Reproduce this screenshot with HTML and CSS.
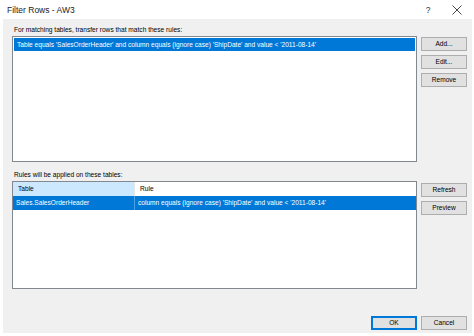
FILE: index.html
```html
<!DOCTYPE html>
<html>
<head>
<meta charset="utf-8">
<link rel="stylesheet" href="styles.css">
</head>
<body>
<div class="titlebar">
  <span class="title">Filter Rows - AW3</span>
  <span class="ctrl help">?</span>
  <span class="ctrl close">
    <svg width="10" height="10" viewBox="0 0 10 10"><path d="M0.5 0.5 L9.5 9.5 M9.5 0.5 L0.5 9.5" stroke="#333" stroke-width="0.9" fill="none"/></svg>
  </span>
</div>
<div class="window">
  <div class="label">For matching tables, transfer rows that match these rules:</div>
  <div class="section">
    <div class="list list-rules">
      <div class="row selected">Table equals 'SalesOrderHeader' and column equals (ignore case) 'ShipDate' and value &lt; '2011-08-14'</div>
    </div>
    <div class="buttons">
      <button class="btn">Add...</button>
      <button class="btn">Edit...</button>
      <button class="btn">Remove</button>
    </div>
  </div>
  <div class="label label2">Rules will be applied on these tables:</div>
  <div class="section">
    <div class="list list-tables">
      <div class="grid-row header">
        <div class="cell c1 sorted">Table</div>
        <div class="cell c2">Rule</div>
      </div>
      <div class="grid-row selected">
        <div class="cell c1">Sales.SalesOrderHeader</div>
        <div class="cell c2">column equals (ignore case) 'ShipDate' and value &lt; '2011-08-14'</div>
      </div>
    </div>
    <div class="buttons">
      <button class="btn">Refresh</button>
      <button class="btn">Preview</button>
    </div>
  </div>
  <div class="footer">
    <button class="btn ok">OK</button>
    <button class="btn">Cancel</button>
  </div>
</div>
</body>
</html>
```

FILE: styles.css
```css
html, body {
  margin: 0;
  padding: 0;
  background: #ffffff;
  font-family: "Liberation Sans", Arial, sans-serif;
  color: #000;
}
.titlebar {
  height: 19px;
  display: flex;
  align-items: center;
  padding-left: 7px;
  font-size: 8.5px;
  color: #222;
}
.title {
  flex: 1;
}
.ctrl {
  display: flex;
  align-items: center;
  justify-content: center;
}
.help {
  width: 12px;
  margin-right: 18px;
  font-size: 8.5px;
  color: #333;
}
.close {
  width: 10px;
  margin-right: 12px;
}
.window {
  margin: 0 2px 0 3px;
  height: 314px;
  background: #f0f0f0;
  padding: 5px 5px 0 9px;
  box-sizing: border-box;
  font-size: 6.6px;
}
.label {
  height: 12px;
  line-height: 11px;
  padding-left: 2px;
}
.label2 {
  margin-top: 7px;
}
.section {
  display: flex;
  gap: 4px;
}
.list {
  width: 405px;
  background: #fff;
  border: 1px solid #828790;
  box-sizing: border-box;
}
.list-rules {
  height: 126px;
  padding: 1px;
}
.list-tables {
  height: 108px;
}
.row {
  height: 13px;
  line-height: 13px;
  padding-left: 3px;
  white-space: nowrap;
}
.selected {
  background: #0078d7;
  color: #fff;
}
.grid-row {
  display: flex;
  height: 14px;
  line-height: 14px;
  white-space: nowrap;
}
.cell {
  padding-left: 3px;
  overflow: hidden;
  box-sizing: border-box;
}
.c1 {
  width: 121px;
  flex: none;
}
.c2 {
  flex: 1;
  border-left: 1px solid #d8e8f5;
}
.header .cell {
  padding-left: 5px;
}
.header .sorted {
  background: #cce8ff;
}
.header .c2 {
  border-left: 1px solid #e5e5e5;
}
.selected .c2 {
  border-left: 1px solid #4da3e8;
}
.buttons {
  display: flex;
  flex-direction: column;
  gap: 4px;
  padding-top: 1px;
}
.list-tables + .buttons {
  padding-top: 2px;
}
.btn {
  width: 46px;
  height: 14px;
  background: #e1e1e1;
  border: 1px solid #adadad;
  font-family: "Liberation Sans", Arial, sans-serif;
  font-size: 6.6px;
  color: #000;
  padding: 0;
  margin: 0;
  line-height: 12px;
}
.footer {
  display: flex;
  justify-content: flex-end;
  gap: 4px;
  margin-top: 27px;
}
.ok {
  border: 1px solid #0078d7;
  box-shadow: inset 0 0 0 1px #0078d7;
}
```
